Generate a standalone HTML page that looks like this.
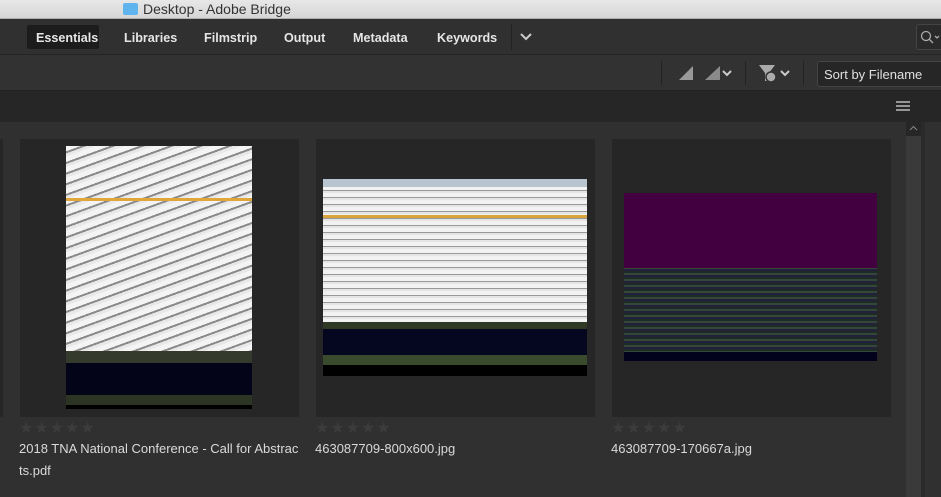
<!DOCTYPE html>
<html><head><meta charset="utf-8"><style>
*{margin:0;padding:0;box-sizing:border-box}
body{width:941px;height:497px;overflow:hidden;background:#303030;font-family:"Liberation Sans",sans-serif;position:relative}
.abs{position:absolute}
#title{left:0;top:0;width:941px;height:19px;background:linear-gradient(#e8e8e8,#d6d6d6);border-bottom:1px solid #b0b0b0}
#title span{position:absolute;left:143px;top:1px;font-size:14px;color:#333}
#folder{left:123px;top:3px;width:15px;height:12px;background:#5fb4ee;border-radius:2px}
#nav{left:0;top:19px;width:941px;height:36px;background:#303030;border-bottom:1px solid #242424}
.tab{position:absolute;top:12px;font-size:12.6px;font-weight:bold;color:#e6e6e6}
#ess{left:27px;top:25px;width:72px;height:24px;background:#1c1c1c;border-radius:2px}
#tool{left:0;top:55px;width:941px;height:36px;background:#323232;border-bottom:1px solid #222}
#sort{left:817px;top:61px;width:130px;height:26px;background:#262626;border:1px solid #444;border-radius:3px;color:#e0e0e0;font-size:13px;padding:5px 0 0 6px}
#bar{left:0;top:91px;width:941px;height:31px;background:#262626}
.card{position:absolute;top:139px;width:279px;height:278px;background:#262626}
.name{position:absolute;font-size:13px;color:#dadada;line-height:22px}
.stars{position:absolute;top:418px;font-size:16px;color:#3c3c3c;letter-spacing:1px;font-family:"DejaVu Sans",sans-serif}
.img1{left:66px;top:146px;width:186px;height:263px;background:
linear-gradient(#000 0 0) 0 259px/100% 4px no-repeat,
linear-gradient(#2c3424 0 0) 0 249px/100% 10px no-repeat,
linear-gradient(#030418 0 0) 0 217px/100% 32px no-repeat,
linear-gradient(#343a2c 0 0) 0 205px/100% 12px no-repeat,
linear-gradient(#e0a63a 0 0) 0 52px/100% 3px no-repeat,
repeating-linear-gradient(160deg,#f4f4f4 0 5px,#8a8a8a 5px 7px,#e8e8e8 7px 10px);}
.img2{left:323px;top:179px;width:264px;height:197px;background:
linear-gradient(#000 0 0) 0 186px/100% 11px no-repeat,
linear-gradient(#3a4a2c 0 0) 0 176px/100% 10px no-repeat,
linear-gradient(#050620 0 0) 0 150px/100% 26px no-repeat,
linear-gradient(#2e3a26 0 0) 0 143px/100% 7px no-repeat,
linear-gradient(#d9a43a 0 0) 0 36px/100% 3px no-repeat,
linear-gradient(#b8c4d0 0 0) 0 0/100% 8px no-repeat,
repeating-linear-gradient(180deg,#f2f2f2 0 4px,#999 4px 5px,#e4e4e4 5px 7px);}
.img3{left:624px;top:193px;width:253px;height:168px;background:
linear-gradient(#02021c 0 0) 0 159px/100% 9px no-repeat,
linear-gradient(#420040 0 0) 0 0/100% 75px no-repeat,
repeating-linear-gradient(180deg,#1e2a26 0 2px,#34483a 2px 4px,#22203a 4px 6px);}
</style></head><body>
<div id="title" class="abs"><span>Desktop - Adobe Bridge</span></div>
<div id="folder" class="abs"></div>
<div id="nav" class="abs"></div>
<div id="ess" class="abs"></div>
<div class="tab" style="left:36px;top:31px">Essentials</div>
<div class="tab" style="left:124px;top:31px">Libraries</div>
<div class="tab" style="left:204px;top:31px">Filmstrip</div>
<div class="tab" style="left:284px;top:31px">Output</div>
<div class="tab" style="left:353px;top:31px">Metadata</div>
<div class="tab" style="left:437px;top:31px">Keywords</div>
<div class="abs" style="left:511px;top:24px;width:1px;height:26px;background:#222"></div>
<svg class="abs" style="left:520px;top:32px" width="12" height="10"><path d="M1 2 L6 7 L11 2" stroke="#ccc" stroke-width="2" fill="none"/></svg>
<div class="abs" style="left:916px;top:24px;width:30px;height:26px;border:1px solid #444;border-radius:3px;background:#2a2a2a"></div>
<svg class="abs" style="left:920px;top:30px" width="21" height="16"><circle cx="6" cy="6" r="4.5" stroke="#aaa" fill="none" stroke-width="1.3"/><path d="M9 9 L13 13 M15 6 L17 8 L19 6" stroke="#aaa" stroke-width="1.3" fill="none"/></svg>
<div id="tool" class="abs"></div>
<div class="abs" style="left:661px;top:61px;width:1px;height:24px;background:#222"></div>
<div class="abs" style="left:745px;top:61px;width:1px;height:24px;background:#222"></div>
<div class="abs" style="left:803px;top:61px;width:1px;height:24px;background:#222"></div>
<svg class="abs" style="left:678px;top:64px" width="60" height="18"><path d="M1 16 L15 16 L15 2 Z" fill="#999"/><path d="M27 16 L42 16 L42 2 Z" fill="#8a8a8a"/><path d="M45 7 L49 11 L53 7" stroke="#ccc" stroke-width="2" fill="none"/></svg>
<svg class="abs" style="left:758px;top:64px" width="36" height="20"><path d="M1 1 L17 1 L11 9 L11 17 L7 17 L7 9 Z" fill="#aaa"/><circle cx="13" cy="13" r="5" fill="#aaa" stroke="#323232" stroke-width="1.5"/><path d="M23 7 L27 11 L31 7" stroke="#ccc" stroke-width="2" fill="none"/></svg>
<div id="sort" class="abs">Sort by Filename</div>
<div id="bar" class="abs"></div>
<svg class="abs" style="left:896px;top:101px" width="14" height="10"><path d="M0 1H14M0 5H14M0 9H14" stroke="#bbb" stroke-width="1.5"/></svg>
<div class="abs" style="left:906px;top:122px;width:15px;height:375px;background:#3a3a3a"></div>
<div class="abs" style="left:906px;top:122px;width:15px;height:14px;background:#262626"></div>
<svg class="abs" style="left:909px;top:125px" width="9" height="6"><path d="M1 5 L4.5 1.5 L8 5" stroke="#888" fill="none"/></svg>
<div class="abs" style="left:921px;top:122px;width:4px;height:375px;background:#2a2a2a"></div>
<div class="abs" style="left:0;top:139px;width:3px;height:278px;background:#262626"></div>
<div class="card" style="left:20px"></div>
<div class="card" style="left:316px"></div>
<div class="card" style="left:612px"></div>
<div class="abs img1"></div>
<div class="abs img2"></div>
<div class="abs img3"></div>
<div class="stars" style="left:19px">★★★★★</div>
<div class="stars" style="left:315px">★★★★★</div>
<div class="stars" style="left:611px">★★★★★</div>
<div class="name" style="left:19px;top:438px">2018 TNA National Conference - Call for Abstrac<br>ts.pdf</div>
<div class="name" style="left:315px;top:438px">463087709-800x600.jpg</div>
<div class="name" style="left:611px;top:438px">463087709-170667a.jpg</div>
</body></html>
